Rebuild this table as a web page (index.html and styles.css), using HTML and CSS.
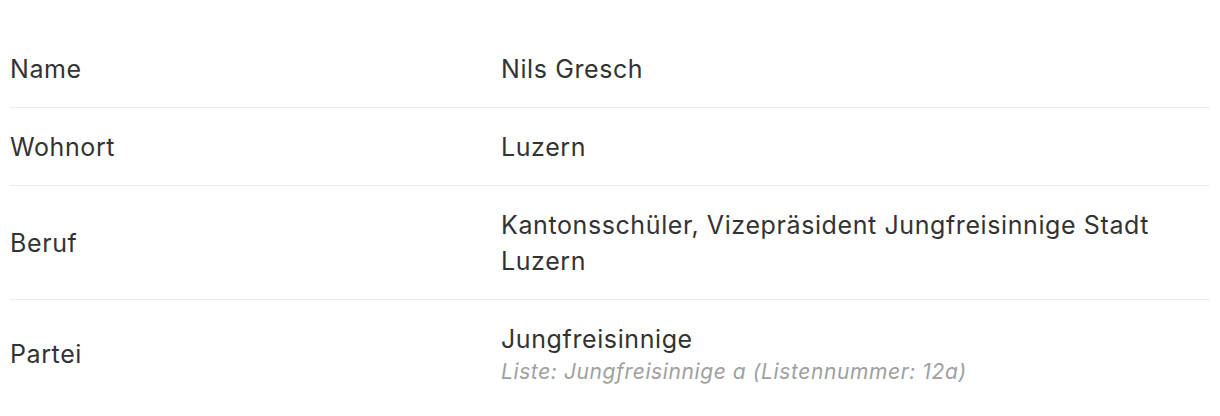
FILE: index.html
```html
<!DOCTYPE html>
<html lang="de">
<head>
<meta charset="utf-8">
<title>Kandidat</title>
<link rel="stylesheet" href="styles.css">
</head>
<body>
<div class="details">
  <div class="row">
    <div class="label">Name</div>
    <div class="value">Nils Gresch</div>
  </div>
  <div class="row">
    <div class="label">Wohnort</div>
    <div class="value">Luzern</div>
  </div>
  <div class="row">
    <div class="label">Beruf</div>
    <div class="value">Kantonsschüler, Vizepräsident Jungfreisinnige Stadt Luzern</div>
  </div>
  <div class="row last">
    <div class="label">Partei</div>
    <div class="value">Jungfreisinnige<div class="sub">Liste: Jungfreisinnige a (Listennummer: 12a)</div></div>
  </div>
</div>
</body>
</html>
```
FILE: styles.css
```css
html, body {
  margin: 0;
  padding: 0;
  background: #fff;
}
body {
  padding: 30px 10px 0 10px;
  font-family: Inter, "Open Sans", sans-serif;
  font-size: 25px;
  letter-spacing: 0.6px;
  line-height: 36px;
  color: #333;
}
.details {
  display: flex;
  flex-direction: column;
}
.row {
  display: grid;
  grid-template-columns: 491px 1fr;
  align-items: center;
  padding: 21px 0 20px 0;
  border-bottom: 1px solid #ebebeb;
}
.row.last {
  border-bottom: none;
}
.sub {
  font-size: 21px;
  letter-spacing: 0.6px;
  line-height: 30px;
  font-style: italic;
  color: #a0a0a0;
}
```
